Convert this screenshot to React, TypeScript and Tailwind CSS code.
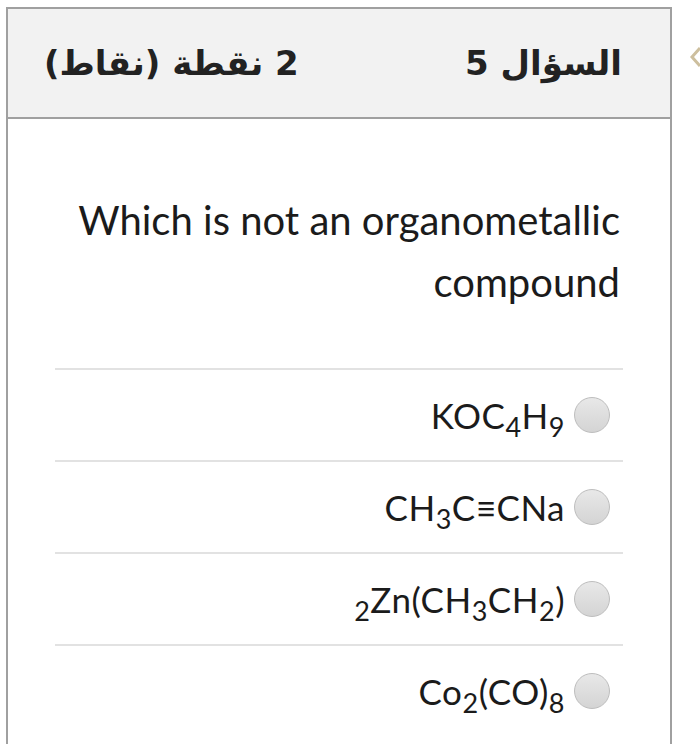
const options = [
  { key: "a", parts: [["KOC", ""], ["4", "sub"], ["H", ""], ["9", "sub"]] },
  { key: "b", parts: [["CH", ""], ["3", "sub"], ["C≡CNa", ""]] },
  { key: "c", parts: [["2", "sub"], ["Zn(CH", ""], ["3", "sub"], ["CH", ""], ["2", "sub"], [")", ""]] },
  { key: "d", parts: [["Co", ""], ["2", "sub"], ["(CO)", ""], ["8", "sub"]] },
];

const Radio = () => (
  <span className="block h-[36px] w-[36px] shrink-0 rounded-full border border-[#bdbdbd] bg-gradient-to-b from-[#e8e8e8] to-[#d4d4d4]" />
);

const App = () => {
  return (
    <div className="relative h-[744px] w-[700px] overflow-hidden bg-white pl-[6px] pt-[7px] font-['Lato',sans-serif] text-[#1b1b1b]">
      <div className="h-[800px] w-[666px] border-2 border-[#a0a0a0]">
        <div className="flex h-[110px] items-center justify-between border-b-2 border-[#a0a0a0] bg-[#f2f2f2] pl-[36px] pr-[48px] font-['DejaVu_Sans',sans-serif] text-[34px] font-bold text-[#222]">
          <span dir="rtl">2 نقطة (نقاط)</span>
          <span dir="rtl">السؤال 5</span>
        </div>

        <div className="pl-[47px] pr-[47px] pt-[70px]">
          <p className="pl-[20px] pr-[3px] text-right text-[40px] leading-[62px]">
            Which is not an organometallic compound
          </p>

          <div className="mt-[55px]">
            {options.map((opt) => (
              <div
                key={opt.key}
                className="flex h-[92px] items-center justify-end gap-[9px] border-t-2 border-[#e2e2e2] pr-[13px]"
              >
                <span dir="ltr" className="text-[35px] leading-none tracking-[0.5px]">
                  {opt.parts.map(([t, kind], i) =>
                    kind === "sub" ? (
                      <span key={i} className="relative top-[8px] text-[27px]">
                        {t}
                      </span>
                    ) : (
                      <span key={i}>{t}</span>
                    )
                  )}
                </span>
                <Radio />
              </div>
            ))}
          </div>
        </div>
      </div>

      <svg
        className="absolute left-[688px] top-[46px]"
        width="14"
        height="22"
        viewBox="0 0 14 22"
      >
        <path d="M12 2 L4 11 L12 20" fill="none" stroke="#cdbf9e" strokeWidth="3" />
      </svg>
    </div>
  );
};

export default App;
